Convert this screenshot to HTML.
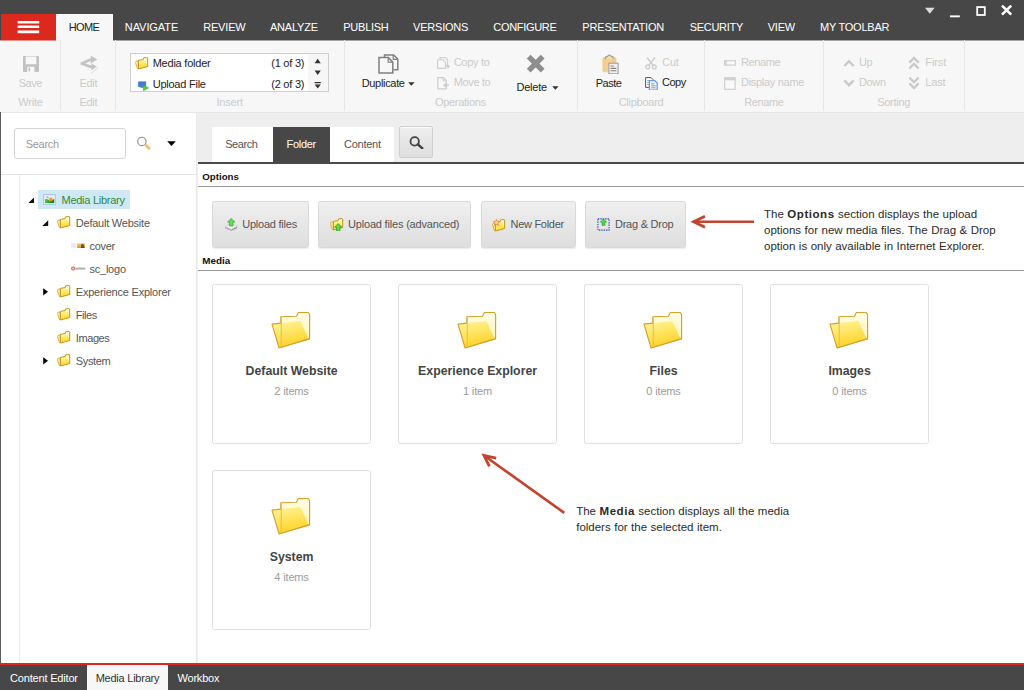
<!DOCTYPE html>
<html><head><meta charset="utf-8"><title>Media Library</title>
<style>
*{box-sizing:border-box;margin:0;padding:0}
html,body{width:1024px;height:690px;overflow:hidden;background:#fff;font-family:"Liberation Sans",sans-serif}
.a{position:absolute;display:block}
.t{position:absolute;white-space:nowrap;font-family:"Liberation Sans",sans-serif}
</style></head><body>
<svg width="0" height="0" style="position:absolute"><defs>
<linearGradient id="gb" x1="0" y1="0" x2="0" y2="1"><stop offset="0" stop-color="#fffde8"/><stop offset="1" stop-color="#fff3a6"/></linearGradient>
<linearGradient id="gf" x1="0" y1="0" x2="0.3" y2="1"><stop offset="0" stop-color="#fff596"/><stop offset="1" stop-color="#ffd019"/></linearGradient>
<g id="folder">
<path d="M9.3,5.3 L25,4.8 L26.8,1 L36.8,1 L38.1,3 L38.1,27.5 L9.3,35.7 Z" fill="url(#gb)" stroke="#d4a02e" stroke-width="1.15" stroke-linejoin="round"/>
<path d="M0.5,12.6 L28.9,9.5 L37,27 L7.6,36.5 Z" fill="url(#gf)" fill-opacity=".9"/>
<path d="M9.3,11.6 L0.5,12.6 L7.6,36.5 L38,27" fill="none" stroke="#d4a02e" stroke-width="1.15" stroke-linejoin="round"/>
<path d="M9.9,6 L9.9,35" fill="none" stroke="#e8bf55" stroke-width=".9"/>
</g>
<linearGradient id="gs" x1="0" y1="0" x2="0.25" y2="1"><stop offset="0" stop-color="#fffcd8"/><stop offset=".45" stop-color="#fff27a"/><stop offset="1" stop-color="#ffd92a"/></linearGradient>
<g id="sfolder">
<path d="M8.3,10 C6,9.9 5.3,10.8 5.8,12.5 L7.7,17.7 L8.6,17.6 Z" fill="#fff4b4" stroke="#d6a42e" stroke-width=".9" stroke-linejoin="round"/>
<path d="M8.5,9.4 L13.3,8.5 L13.9,6.7 L17.5,6.7 L17.8,7.1 L17.8,15.5 L8.5,18 Z" fill="url(#gs)" stroke="#c6931d" stroke-width="1" stroke-linejoin="round"/>
<path d="M14.4,7.6 L16.9,7.6 L16.9,13.6 L15.6,10 L14,10 Z" fill="#fffef0" fill-opacity=".85"/>
</g>
</defs></svg>
<div class="a" style="left:0px;top:0px;width:1024px;height:40px;background:#474747"></div>
<div class="a" style="left:1px;top:14px;width:55px;height:26.5px;background:#dc291e"></div>
<svg class="a" style="left:17px;top:20px;" width="23" height="14" viewBox="17 20 23 14"><path d="M17.6,20.9 H39.2 V23.4 H17.6 Z M17.6,25.6 H39.2 V28.1 H17.6 Z M17.6,30.6 H39.2 V33.2 H17.6 Z" fill="#fff"/></svg>
<div class="a" style="left:56px;top:14px;width:57px;height:27px;background:#f7f7f7"></div>
<div class="t" style="left:68.70px;top:20.00px;font-size:11.00px;line-height:14px;color:#222;letter-spacing:-0.634px;">HOME</div>
<div class="t" style="left:124.80px;top:20.00px;font-size:11.00px;line-height:14px;color:#fff;letter-spacing:-0.070px;">NAVIGATE</div>
<div class="t" style="left:203.20px;top:20.00px;font-size:11.00px;line-height:14px;color:#fff;letter-spacing:-0.179px;">REVIEW</div>
<div class="t" style="left:269.90px;top:20.00px;font-size:11.00px;line-height:14px;color:#fff;letter-spacing:-0.202px;">ANALYZE</div>
<div class="t" style="left:343.30px;top:20.00px;font-size:11.00px;line-height:14px;color:#fff;letter-spacing:-0.262px;">PUBLISH</div>
<div class="t" style="left:413.00px;top:20.00px;font-size:11.00px;line-height:14px;color:#fff;letter-spacing:-0.207px;">VERSIONS</div>
<div class="t" style="left:493.30px;top:20.00px;font-size:11.00px;line-height:14px;color:#fff;letter-spacing:-0.313px;">CONFIGURE</div>
<div class="t" style="left:582.30px;top:20.00px;font-size:11.00px;line-height:14px;color:#fff;letter-spacing:-0.176px;">PRESENTATION</div>
<div class="t" style="left:689.70px;top:20.00px;font-size:11.00px;line-height:14px;color:#fff;letter-spacing:-0.289px;">SECURITY</div>
<div class="t" style="left:767.80px;top:20.00px;font-size:11.00px;line-height:14px;color:#fff;letter-spacing:-0.271px;">VIEW</div>
<div class="t" style="left:820.00px;top:20.00px;font-size:11.00px;line-height:14px;color:#fff;letter-spacing:-0.225px;">MY TOOLBAR</div>
<svg class="a" style="left:920px;top:0px;" width="104" height="22" viewBox="920 0 104 22">
<path d="M925,7.8 L934.6,7.8 L929.8,13.8 Z" fill="#ddd"/>
<rect x="950" y="15.4" width="9.8" height="1.9" fill="#fff"/>
<rect x="977.2" y="7.1" width="7.6" height="7.9" fill="none" stroke="#fff" stroke-width="1.8"/>
<path d="M1002,5.6 L1011.2,14.6 M1011.2,5.6 L1002,14.6" stroke="#fff" stroke-width="2.6" fill="none"/></svg>
<div class="a" style="left:0px;top:40px;width:1024px;height:71.5px;background:#f7f7f7"></div>
<div class="a" style="left:0px;top:40px;width:1024px;height:1px;background:#a4a4a4"></div>
<div class="a" style="left:1px;top:40px;width:55px;height:1px;background:#e88f88"></div>
<div class="a" style="left:56px;top:40px;width:57px;height:1px;background:#f7f7f7"></div>
<div class="a" style="left:0px;top:111.5px;width:1024px;height:1px;background:#e6e6e6"></div>
<div class="a" style="left:60px;top:40px;width:1px;height:71px;background:#e7e7e7"></div>
<div class="a" style="left:115px;top:40px;width:1px;height:71px;background:#e7e7e7"></div>
<div class="a" style="left:343.5px;top:40px;width:1px;height:71px;background:#e7e7e7"></div>
<div class="a" style="left:577px;top:40px;width:1px;height:71px;background:#e7e7e7"></div>
<div class="a" style="left:704px;top:40px;width:1px;height:71px;background:#e7e7e7"></div>
<div class="a" style="left:823px;top:40px;width:1px;height:71px;background:#e7e7e7"></div>
<div class="a" style="left:964px;top:40px;width:1px;height:71px;background:#e7e7e7"></div>
<div class="t" style="left:18.20px;top:95.00px;font-size:11.00px;line-height:14px;color:#cbcbcb;letter-spacing:-0.166px;">Write</div>
<div class="t" style="left:79.50px;top:95.00px;font-size:11.00px;line-height:14px;color:#cbcbcb;letter-spacing:-0.318px;">Edit</div>
<div class="t" style="left:216.50px;top:95.00px;font-size:11.00px;line-height:14px;color:#cbcbcb;letter-spacing:-0.202px;">Insert</div>
<div class="t" style="left:435.00px;top:95.00px;font-size:11.00px;line-height:14px;color:#cbcbcb;letter-spacing:-0.312px;">Operations</div>
<div class="t" style="left:618.70px;top:95.00px;font-size:11.00px;line-height:14px;color:#cbcbcb;letter-spacing:-0.261px;">Clipboard</div>
<div class="t" style="left:744.30px;top:95.00px;font-size:11.00px;line-height:14px;color:#cbcbcb;letter-spacing:-0.416px;">Rename</div>
<div class="t" style="left:877.20px;top:95.00px;font-size:11.00px;line-height:14px;color:#cbcbcb;letter-spacing:-0.276px;">Sorting</div>
<svg class="a" style="left:23px;top:55.7px;" width="16" height="16" viewBox="0 0 16 16"><path d="M1,0 H15 Q16,0 16,1 V15 Q16,16 15,16 H1 Q0,16 0,15 V1 Q0,0 1,0 Z M2.7,0.6 V8.2 H13.3 V0.6 Z M4.2,10.7 V16 H11.4 V10.7 Z" fill="#c2c2c2" fill-rule="evenodd"/><rect x="5.5" y="11.6" width="1.6" height="3.6" fill="#c2c2c2"/></svg>
<div class="t" style="left:18.70px;top:76.00px;font-size:11.00px;line-height:14px;color:#cbcbcb;letter-spacing:-0.424px;">Save</div>
<svg class="a" style="left:79px;top:55px;" width="21" height="20" viewBox="79 55 21 20"><path d="M80.6,63.6 C86,63.6 86,59.6 92.5,59.6 M80.6,63.6 C86,63.6 87,67 92.6,66.8" stroke="#c4c4c4" stroke-width="2.7" fill="none"/><path d="M90.8,55.6 L97.4,59.5 L90.8,63.4 Z M91.4,63.2 L96.8,66.8 L91.4,70.2 Z" fill="#c4c4c4"/><path d="M91.4,73.4 L98.2,67" stroke="#e6e6e6" stroke-width="1.4"/></svg>
<div class="t" style="left:79.50px;top:76.00px;font-size:11.00px;line-height:14px;color:#cbcbcb;letter-spacing:-0.318px;">Edit</div>
<div class="a" style="left:130px;top:53px;width:198.5px;height:38.7px;background:#fff;border:1px solid #cfcfcf"></div>
<div class="a" style="left:308px;top:54px;width:19.5px;height:36.7px;background:#f6f6f6"></div>
<svg class="a" style="left:135px;top:57px;" width="14" height="13" viewBox="5.1 6 14 13"><use href="#sfolder"/></svg>
<div class="t" style="left:152.70px;top:56.00px;font-size:11.00px;line-height:14px;color:#222;letter-spacing:-0.230px;">Media folder</div>
<div class="t" style="left:152.70px;top:77.00px;font-size:11.00px;line-height:14px;color:#222;letter-spacing:-0.234px;">Upload File</div>
<div class="t" style="left:271.20px;top:56.00px;font-size:11.00px;line-height:14px;color:#222;letter-spacing:-0.221px;">(1 of 3)</div>
<div class="t" style="left:271.20px;top:77.00px;font-size:11.00px;line-height:14px;color:#222;letter-spacing:-0.221px;">(2 of 3)</div>
<svg class="a" style="left:137.5px;top:79.5px;" width="12" height="11" viewBox="0 0 12 11"><rect x="0.7" y="1.9" width="7" height="4.8" fill="#3f7fd6" stroke="#3a6cc4" stroke-width=".8"/><rect x="2.4" y="7" width="3" height="1" fill="#8a97b3"/><path d="M5.4,5 L10.6,7.9 L5.4,10.8 Z" fill="#56c948" stroke="#36a336" stroke-width=".5"/></svg>
<svg class="a" style="left:313px;top:57px;" width="10" height="33" viewBox="0 0 10 33"><path d="M1.6,6.2 L7.8,6.2 L4.7,1.7 Z M1.6,13.6 L7.8,13.6 L4.7,18 Z M1.6,25 H7.8 V26.2 H1.6 Z M1.6,27.4 L7.8,27.4 L4.7,31.4 Z" fill="#333"/></svg>
<svg class="a" style="left:377.5px;top:54px;" width="21" height="20" viewBox="0 0 21 20"><path d="M6.5,3.2 V0.9 H15.6 L19.8,5 V15.8 H15.4" fill="none" stroke="#808080" stroke-width="1.5"/><path d="M15.2,1 V5.4 H19.6" fill="none" stroke="#808080" stroke-width="1.2"/><path d="M1,3.6 H10.4 L14.8,8 V19 H1 Z" fill="#f7f7f7" stroke="#808080" stroke-width="1.5"/><path d="M10.2,3.8 V8.2 H14.6" fill="none" stroke="#808080" stroke-width="1.2"/></svg>
<div class="t" style="left:361.70px;top:76.00px;font-size:11.00px;line-height:14px;color:#222;letter-spacing:-0.320px;">Duplicate</div>
<svg class="a" style="left:408px;top:82px;" width="7" height="4" viewBox="0 0 7 4"><path d="M0.2,0.3 H6.6 L3.4,3.8 Z" fill="#333"/></svg>
<svg class="a" style="left:437px;top:57px;" width="12.5" height="12" viewBox="0 0 12.5 12"><path d="M3,2.6 V0.6 H8.4 L10.6,2.8 V8.4 H8.6" fill="none" stroke="#cfcfcf" stroke-width="1.1"/><path d="M0.6,2.8 H6 L8.4,5.2 V11.4 H0.6 Z" fill="none" stroke="#cfcfcf" stroke-width="1.1"/><path d="M8.6,9.6 H12 M10.6,8 L12.2,9.6 L10.6,11.2" stroke="#cfcfcf" stroke-width="1.1" fill="none"/></svg>
<div class="t" style="left:453.70px;top:55.00px;font-size:11.00px;line-height:14px;color:#cbcbcb;letter-spacing:-0.268px;">Copy to</div>
<svg class="a" style="left:437px;top:77px;" width="12.5" height="12.5" viewBox="0 0 12.5 12.5"><path d="M0.8,0.6 H6.4 L9.4,3.6 V11.8 H0.8 Z" fill="none" stroke="#cfcfcf" stroke-width="1.2"/><path d="M6.2,0.8 V3.8 H9.2" fill="none" stroke="#cfcfcf" stroke-width="1"/><path d="M12,8.2 H7.2 M9,6.2 L7,8.2 L9,10.2" stroke="#cfcfcf" stroke-width="1.4" fill="none"/></svg>
<div class="t" style="left:453.70px;top:75.00px;font-size:11.00px;line-height:14px;color:#cbcbcb;letter-spacing:-0.355px;">Move to</div>
<svg class="a" style="left:526.3px;top:54.2px;" width="19.4" height="19.4" viewBox="0 0 19.4 19.4"><path d="M2.7,2.7 L16.7,16.7 M16.7,2.7 L2.7,16.7" stroke="#8e8e8e" stroke-width="5.4" fill="none"/></svg>
<div class="t" style="left:516.50px;top:80.00px;font-size:11.00px;line-height:14px;color:#222;letter-spacing:-0.220px;">Delete</div>
<svg class="a" style="left:552.2px;top:85.9px;" width="7" height="4" viewBox="0 0 7 4"><path d="M0.2,0.3 H6.6 L3.4,3.8 Z" fill="#333"/></svg>
<svg class="a" style="left:602px;top:53.5px;" width="17.5" height="20.5" viewBox="0 0 17.5 20.5"><rect x="0.8" y="3.6" width="13.2" height="14.2" rx="1.2" fill="#f2cf8e" stroke="#ecc47a" stroke-width=".6"/><path d="M3.6,5.2 V3.4 Q3.6,2.6 4.4,2.6 H5.4 A2.1,2.1 0 0 1 9.4,2.6 H10.4 Q11.2,2.6 11.2,3.4 V5.2" fill="#f6dca8" stroke="#9e9e9e" stroke-width="1.1"/><rect x="6.9" y="9.2" width="9.2" height="10.6" fill="#f1f1f1" stroke="#9a9a9a" stroke-width="1"/><path d="M8.6,12 H11.8 M8.6,14.4 H14.4 M8.6,16.8 H14.4" stroke="#858585" stroke-width="1.1"/></svg>
<div class="t" style="left:595.70px;top:76.00px;font-size:11.00px;line-height:14px;color:#222;letter-spacing:-0.457px;">Paste</div>
<svg class="a" style="left:645px;top:57px;" width="12" height="12.5" viewBox="0 0 12 12.5"><path d="M2,0.5 L8.4,8.6 M10,0.5 L3.6,8.6" stroke="#cdcdcd" stroke-width="1.5" fill="none"/><circle cx="2.7" cy="9.9" r="1.9" fill="none" stroke="#cdcdcd" stroke-width="1.3"/><circle cx="9.3" cy="9.9" r="1.9" fill="none" stroke="#cdcdcd" stroke-width="1.3"/></svg>
<div class="t" style="left:662.30px;top:55.00px;font-size:10.50px;line-height:14px;color:#cbcbcb;">Cut</div>
<svg class="a" style="left:644.5px;top:76.5px;" width="13" height="13.5" viewBox="0 0 13 13.5"><path d="M0.6,0.6 H6 L8,2.6 V10.4 H0.6 Z" fill="#fff" stroke="#555" stroke-width="1"/><path d="M2.2,3.6 H5.6 M2.2,5.6 H6 M2.2,7.6 H4" stroke="#888" stroke-width=".8"/><path d="M4.4,3.6 H9.8 L12.2,6 V13 H4.4 Z" fill="#eef4fc" stroke="#6b9ad6" stroke-width="1.2"/><path d="M6.2,6.8 H9.4 M6.2,8.8 H10.6 M6.2,10.8 H10.6" stroke="#8c8c8c" stroke-width=".9"/></svg>
<div class="t" style="left:662.00px;top:75.00px;font-size:11.00px;line-height:14px;color:#222;letter-spacing:-0.493px;">Copy</div>
<svg class="a" style="left:724px;top:60px;" width="12" height="6" viewBox="0 0 12 6"><rect x="0.6" y="0.7" width="10.8" height="4.4" fill="#f9f9f9" stroke="#cfcfcf" stroke-width="1.2"/><rect x="0.6" y="0.7" width="2" height="4.4" fill="#cfcfcf"/></svg>
<div class="t" style="left:741.00px;top:55.00px;font-size:11.00px;line-height:14px;color:#cbcbcb;letter-spacing:-0.376px;">Rename</div>
<svg class="a" style="left:724px;top:77px;" width="12" height="13" viewBox="0 0 12 13"><rect x="0.7" y="0.7" width="10.4" height="11.6" fill="#fafafa" stroke="#cfcfcf" stroke-width="1.2"/><rect x="0.7" y="0.7" width="10.4" height="2.6" fill="#cfcfcf"/></svg>
<div class="t" style="left:741.00px;top:75.00px;font-size:11.00px;line-height:14px;color:#cbcbcb;letter-spacing:-0.295px;">Display name</div>
<svg class="a" style="left:842.5px;top:59px;" width="12" height="8.5" viewBox="0 0 12 8.5"><path d="M1.4,7 L6,2.2 L10.6,7" stroke="#c9c9c9" stroke-width="2.4" fill="none"/></svg>
<div class="t" style="left:859.00px;top:55.00px;font-size:11.00px;line-height:14px;color:#cbcbcb;letter-spacing:-0.562px;">Up</div>
<svg class="a" style="left:842.5px;top:79px;" width="12" height="8.5" viewBox="0 0 12 8.5"><path d="M1.4,1.4 L6,6.2 L10.6,1.4" stroke="#c9c9c9" stroke-width="2.4" fill="none"/></svg>
<div class="t" style="left:859.00px;top:75.00px;font-size:11.00px;line-height:14px;color:#cbcbcb;letter-spacing:-0.375px;">Down</div>
<svg class="a" style="left:908.3px;top:56px;" width="12" height="14" viewBox="0 0 12 14"><path d="M1.4,6.6 L6,2 L10.6,6.6 M1.4,12.4 L6,7.8 L10.6,12.4" stroke="#c9c9c9" stroke-width="2.3" fill="none"/></svg>
<div class="t" style="left:925.30px;top:55.00px;font-size:11.00px;line-height:14px;color:#cbcbcb;letter-spacing:-0.121px;">First</div>
<svg class="a" style="left:908.3px;top:76px;" width="12" height="14" viewBox="0 0 12 14"><path d="M1.4,1.6 L6,6.2 L10.6,1.6 M1.4,7.4 L6,12 L10.6,7.4" stroke="#c9c9c9" stroke-width="2.3" fill="none"/></svg>
<div class="t" style="left:925.30px;top:75.00px;font-size:11.00px;line-height:14px;color:#cbcbcb;letter-spacing:-0.197px;">Last</div>
<div class="a" style="left:0px;top:112px;width:1px;height:553px;background:#5a5a5a"></div>
<div class="a" style="left:196px;top:112px;width:2.4px;height:551px;background:linear-gradient(90deg,#e6e6e6,#f2f2f2)"></div>
<div class="a" style="left:1px;top:174.3px;width:195px;height:1px;background:#e4e4e4"></div>
<div class="a" style="left:18.5px;top:175px;width:1px;height:488px;background:#ececec"></div>
<div class="a" style="left:14px;top:128px;width:112px;height:31px;background:#fff;border:1px solid #d4d4d4;border-radius:3px"></div>
<div class="t" style="left:25.70px;top:137.00px;font-size:11.00px;line-height:14px;color:#9a9a9a;letter-spacing:-0.271px;">Search</div>
<svg class="a" style="left:135.6px;top:136.3px;" width="16" height="15" viewBox="0 0 16 15"><path d="M9.4,8.8 L13.9,13.2" stroke="#efc271" stroke-width="3" /><circle cx="5.9" cy="5.4" r="4.2" fill="#fdfdfd" stroke="#8f8f8f" stroke-width="1.1"/></svg>
<svg class="a" style="left:167px;top:140.5px;" width="9" height="5.2" viewBox="0 0 9 5.2"><path d="M0.2,0.2 H8.8 L4.5,5 Z" fill="#000"/></svg>
<div class="a" style="left:38px;top:190px;width:92.3px;height:19px;background:#cfe8f5"></div>
<svg class="a" style="left:28px;top:197px;" width="6.4" height="6.2" viewBox="0 0 6.4 6.2"><path d="M6.2,0.2 V6 H0.3 Z" fill="#111"/></svg>
<svg class="a" style="left:38px;top:188px;" width="24" height="24" viewBox="0 0 24 24"><defs><linearGradient id="gh" x1="0" y1="0" x2="1" y2="0.3"><stop offset="0" stop-color="#62d440"/><stop offset="1" stop-color="#0b8a18"/></linearGradient></defs><rect x="5.7" y="6.6" width="11.6" height="9.7" fill="#eef3fc" stroke="#a8c1ea" stroke-width="1"/><rect x="7" y="8" width="9.2" height="7" fill="#e9eef8"/><path d="M7.6,8.4 L9.4,8.2 L11.4,10.2 L10,10.6 Z" fill="#93a3c4" fill-opacity=".8"/><path d="M7,10.9 L9,11.1 L11.6,12.4 L14,12 L16.2,10.9 V15 H7 Z" fill="url(#gh)"/><circle cx="12.9" cy="11.4" r="1.8" fill="#ff9224"/></svg>
<div class="t" style="left:61.50px;top:193.00px;font-size:11.00px;line-height:14px;color:#2d8a3c;letter-spacing:-0.262px;">Media Library</div>
<svg class="a" style="left:42.2px;top:220px;" width="6.4" height="6.2" viewBox="0 0 6.4 6.2"><path d="M6.2,0.2 V6 H0.3 Z" fill="#111"/></svg>
<svg class="a" style="left:57.1px;top:216.0px;" width="14" height="13" viewBox="5.1 6 14 13"><use href="#sfolder"/></svg>
<div class="t" style="left:75.80px;top:216.00px;font-size:11.00px;line-height:14px;color:#555;letter-spacing:-0.232px;">Default Website</div>
<div class="a" style="left:71px;top:243px;width:5px;height:5px;background:#ededed"></div>
<svg class="a" style="left:77.2px;top:242.6px;" width="8" height="5.4" viewBox="0 0 8 5.4"><rect width="8" height="5.4" fill="#f2c244"/><path d="M3.4,5.4 L4.6,0.6 L6,0.2 L8,5.4 Z" fill="#5c5048"/><path d="M0,5.4 L1.6,2 L3.6,5.4 Z" fill="#d89a2a"/><rect width="8" height="0.9" fill="#f7e3a6"/></svg>
<div class="t" style="left:89.50px;top:239.00px;font-size:11.00px;line-height:14px;color:#555;letter-spacing:-0.300px;">cover</div>
<svg class="a" style="left:70.6px;top:266px;" width="15" height="5" viewBox="0 0 15 5"><circle cx="2.1" cy="2.5" r="1.5" fill="#fbe4e4" stroke="#ea5050" stroke-width="1.1"/><rect x="4.4" y="1.6" width="10" height="1.9" fill="#adadad"/></svg>
<div class="t" style="left:89.50px;top:262.00px;font-size:11.00px;line-height:14px;color:#555;letter-spacing:-0.236px;">sc_logo</div>
<svg class="a" style="left:43px;top:288.1px;" width="5.2" height="7.6" viewBox="0 0 5.2 7.6"><path d="M0.2,0.2 L5,3.8 L0.2,7.4 Z" fill="#000"/></svg>
<svg class="a" style="left:57.1px;top:285.2px;" width="14" height="13" viewBox="5.1 6 14 13"><use href="#sfolder"/></svg>
<div class="t" style="left:75.80px;top:285.00px;font-size:11.00px;line-height:14px;color:#555;letter-spacing:-0.214px;">Experience Explorer</div>
<svg class="a" style="left:57.1px;top:308.2px;" width="14" height="13" viewBox="5.1 6 14 13"><use href="#sfolder"/></svg>
<div class="t" style="left:75.80px;top:308.00px;font-size:11.00px;line-height:14px;color:#555;letter-spacing:-0.431px;">Files</div>
<svg class="a" style="left:57.1px;top:331.2px;" width="14" height="13" viewBox="5.1 6 14 13"><use href="#sfolder"/></svg>
<div class="t" style="left:75.80px;top:331.00px;font-size:11.00px;line-height:14px;color:#555;letter-spacing:-0.415px;">Images</div>
<svg class="a" style="left:43px;top:357.1px;" width="5.2" height="7.6" viewBox="0 0 5.2 7.6"><path d="M0.2,0.2 L5,3.8 L0.2,7.4 Z" fill="#000"/></svg>
<svg class="a" style="left:57.1px;top:354.2px;" width="14" height="13" viewBox="5.1 6 14 13"><use href="#sfolder"/></svg>
<div class="t" style="left:75.80px;top:354.00px;font-size:11.00px;line-height:14px;color:#555;letter-spacing:-0.355px;">System</div>
<div class="a" style="left:198.3px;top:112.5px;width:825.7px;height:49.5px;background:#eeeeee"></div>
<div class="a" style="left:198.3px;top:161.8px;width:825.7px;height:1.8px;background:#4a4a4a"></div>
<div class="a" style="left:211.8px;top:126.7px;width:61.4px;height:35.3px;background:#fff"></div>
<div class="a" style="left:273.2px;top:126.7px;width:56.4px;height:36.5px;background:#474747"></div>
<div class="a" style="left:329.6px;top:126.7px;width:64.6px;height:35.3px;background:#fff"></div>
<div class="t" style="left:225.20px;top:137.00px;font-size:11.00px;line-height:14px;color:#555;letter-spacing:-0.411px;">Search</div>
<div class="t" style="left:286.50px;top:137.00px;font-size:11.00px;line-height:14px;color:#fff;letter-spacing:-0.296px;">Folder</div>
<div class="t" style="left:344.00px;top:137.00px;font-size:11.00px;line-height:14px;color:#555;letter-spacing:-0.255px;">Content</div>
<div class="a" style="left:399.4px;top:126px;width:33.2px;height:32px;background:linear-gradient(#eeeeee,#dedede);border:1px solid #cfcfcf;border-radius:2px;box-shadow:inset 0 1px 0 rgba(255,255,255,.7)"></div>
<svg class="a" style="left:408.8px;top:135.6px;" width="15.4" height="13.6" viewBox="0 0 15.4 13.6"><circle cx="5.7" cy="5.4" r="4.2" fill="none" stroke="#444" stroke-width="1.8"/><path d="M8.9,8.4 L13.2,12.2" stroke="#444" stroke-width="2.5" stroke-linecap="round"/></svg>
<div class="t" style="left:202.20px;top:170.00px;font-size:9.74px;line-height:13px;color:#111;font-weight:bold;">Options</div>
<div class="a" style="left:198.3px;top:185.8px;width:825.7px;height:1px;background:#9a9a9a"></div>
<div class="t" style="left:202.20px;top:254.00px;font-size:9.88px;line-height:13px;color:#111;font-weight:bold;">Media</div>
<div class="a" style="left:198.3px;top:269.6px;width:825.7px;height:1px;background:#9a9a9a"></div>
<div class="a" style="left:212.2px;top:200.5px;width:96.8px;height:47px;background:linear-gradient(#efefef,#dedede);border:1px solid #d9d9d9;border-radius:2.5px;box-shadow:0 1px 1px rgba(0,0,0,.08)"></div>
<div class="a" style="left:318px;top:200.5px;width:152.8px;height:47px;background:linear-gradient(#efefef,#dedede);border:1px solid #d9d9d9;border-radius:2.5px;box-shadow:0 1px 1px rgba(0,0,0,.08)"></div>
<div class="a" style="left:480.5px;top:200.5px;width:95.3px;height:47px;background:linear-gradient(#efefef,#dedede);border:1px solid #d9d9d9;border-radius:2.5px;box-shadow:0 1px 1px rgba(0,0,0,.08)"></div>
<div class="a" style="left:585px;top:200.5px;width:100.6px;height:47px;background:linear-gradient(#efefef,#dedede);border:1px solid #d9d9d9;border-radius:2.5px;box-shadow:0 1px 1px rgba(0,0,0,.08)"></div>
<div class="t" style="left:242.20px;top:217.00px;font-size:11.00px;line-height:14px;color:#555;letter-spacing:-0.225px;">Upload files</div>
<div class="t" style="left:348.00px;top:217.00px;font-size:11.00px;line-height:14px;color:#555;letter-spacing:-0.185px;">Upload files (advanced)</div>
<div class="t" style="left:510.50px;top:217.00px;font-size:11.00px;line-height:14px;color:#555;letter-spacing:-0.283px;">New Folder</div>
<div class="t" style="left:615.00px;top:217.00px;font-size:11.00px;line-height:14px;color:#555;letter-spacing:-0.244px;">Drag &amp; Drop</div>
<svg class="a" style="left:224.5px;top:218.2px;" width="12.4" height="13" viewBox="0 0 12.4 13"><path d="M0.4,8.6 L6.2,11.4 L12,8.6 V10.2 L6.2,12.8 L0.4,10.2 Z" fill="#8d8d8d"/><path d="M0.4,8.6 L6.2,11.4 V12.8 L0.4,10.2 Z" fill="#b9b9b9"/><path d="M0.4,8.6 L6.2,5.8 L12,8.6 L6.2,11.4 Z" fill="#f6f6f6" stroke="#b4b4b4" stroke-width=".5"/><path d="M6.2,0.5 L9.8,4 H8 V8 H4.4 V4 H2.6 Z" fill="#62e052" stroke="#2fa82f" stroke-width=".7" stroke-linejoin="round"/></svg>
<svg class="a" style="left:330px;top:218px;" width="14" height="13" viewBox="5.1 6 14 13"><use href="#sfolder"/></svg>
<svg class="a" style="left:334.2px;top:222.6px;" width="8.4" height="8.6" viewBox="0 0 8.4 8.6"><path d="M4.2,0.6 L7.8,4.2 H5.9 V7.8 H2.5 V4.2 H0.6 Z" fill="#5cdc4e" stroke="#2a9d2a" stroke-width=".8" stroke-linejoin="round"/></svg>
<svg class="a" style="left:492.4px;top:218.8px;" width="14" height="13" viewBox="5.1 6 14 13"><use href="#sfolder"/></svg>
<svg class="a" style="left:492.8px;top:218.8px;" width="7" height="7" viewBox="0 0 7 7"><path d="M3.5,0.2 L4.4,2.2 L6.8,2.6 L5,4.2 L5.6,6.6 L3.5,5.4 L1.4,6.6 L2,4.2 L0.2,2.6 L2.6,2.2 Z" fill="#ff8a3c" stroke="#ff7a50" stroke-width=".6" stroke-linejoin="round"/><circle cx="3.5" cy="3.5" r="1.5" fill="#ffe27a"/></svg>
<svg class="a" style="left:596.8px;top:218.2px;" width="13" height="13" viewBox="0 0 13 13"><rect x="0.9" y="0.9" width="11.2" height="11.2" fill="none" stroke="#2b49c0" stroke-width="1.1" stroke-dasharray="1.4 1"/><path d="M6.5,0.9 L9.6,4.1 H8 V7.3 H5 V4.1 H3.4 Z" fill="#4fd84a" stroke="#27a127" stroke-width=".7" stroke-linejoin="round"/></svg>
<svg class="a" style="left:688px;top:210px;" width="70" height="24" viewBox="688 210 70 24"><path d="M754,221.7 H694" stroke="#c4432c" stroke-width="2.6" fill="none"/><path d="M705,216.3 L693.6,221.7 L705,227.3" stroke="#c4432c" stroke-width="2.8" fill="none" stroke-linejoin="miter"/></svg>
<div class="t" id="an1" style="left:764px;top:205.5px;font-size:11.5px;word-spacing:.3px;line-height:16px;color:#2a2a2a">The <b style="letter-spacing:.55px">Options</b> section displays the upload<br>options for new media files. The Drag &amp; Drop<br>option is only available in Internet Explorer.</div>
<svg class="a" style="left:478px;top:450px;" width="92" height="68" viewBox="478 450 92 68"><path d="M564.3,512.9 L484,455.5" stroke="#c4432c" stroke-width="2.6" fill="none"/><path d="M496.2,458.2 L484,455.6 L489.4,466.4" stroke="#c4432c" stroke-width="2.8" fill="none" stroke-linejoin="miter"/></svg>
<div class="t" id="an2" style="left:576.2px;top:503.2px;font-size:11.5px;word-spacing:.3px;line-height:16px;color:#2a2a2a">The <b style="letter-spacing:.55px">Media</b> section displays all the media<br>folders for the selected item.</div>
<div class="a" style="left:212px;top:284px;width:159px;height:160px;background:#fff;border:1px solid #e0e0e0;border-radius:2.5px"></div>
<svg class="a" style="left:270.8px;top:310.6px;" width="40" height="38.5" viewBox="-0.5 -0.5 40 38.5"><use href="#folder"/></svg>
<div class="t" style="left:245.58px;top:363.00px;font-size:12.30px;line-height:16px;color:#444;font-weight:bold;">Default Website</div>
<div class="t" style="left:274.36px;top:384.00px;font-size:11.00px;line-height:14px;color:#9a9a9a;letter-spacing:-0.161px;">2 items</div>
<div class="a" style="left:398px;top:284px;width:159px;height:160px;background:#fff;border:1px solid #e0e0e0;border-radius:2.5px"></div>
<svg class="a" style="left:456.8px;top:310.6px;" width="40" height="38.5" viewBox="-0.5 -0.5 40 38.5"><use href="#folder"/></svg>
<div class="t" style="left:418.12px;top:363.00px;font-size:12.30px;line-height:16px;color:#444;font-weight:bold;">Experience Explorer</div>
<div class="t" style="left:463.03px;top:384.00px;font-size:11.00px;line-height:14px;color:#9a9a9a;letter-spacing:-0.163px;">1 item</div>
<div class="a" style="left:584px;top:284px;width:159px;height:160px;background:#fff;border:1px solid #e0e0e0;border-radius:2.5px"></div>
<svg class="a" style="left:642.8000000000001px;top:310.6px;" width="40" height="38.5" viewBox="-0.5 -0.5 40 38.5"><use href="#folder"/></svg>
<div class="t" style="left:649.59px;top:363.00px;font-size:12.30px;line-height:16px;color:#444;font-weight:bold;">Files</div>
<div class="t" style="left:646.36px;top:384.00px;font-size:11.00px;line-height:14px;color:#9a9a9a;letter-spacing:-0.161px;">0 items</div>
<div class="a" style="left:770px;top:284px;width:159px;height:160px;background:#fff;border:1px solid #e0e0e0;border-radius:2.5px"></div>
<svg class="a" style="left:828.8000000000001px;top:310.6px;" width="40" height="38.5" viewBox="-0.5 -0.5 40 38.5"><use href="#folder"/></svg>
<div class="t" style="left:828.41px;top:363.00px;font-size:12.30px;line-height:16px;color:#444;font-weight:bold;">Images</div>
<div class="t" style="left:832.36px;top:384.00px;font-size:11.00px;line-height:14px;color:#9a9a9a;letter-spacing:-0.161px;">0 items</div>
<div class="a" style="left:212px;top:470px;width:159px;height:160px;background:#fff;border:1px solid #e0e0e0;border-radius:2.5px"></div>
<svg class="a" style="left:270.8px;top:496.6px;" width="40" height="38.5" viewBox="-0.5 -0.5 40 38.5"><use href="#folder"/></svg>
<div class="t" style="left:269.72px;top:549.00px;font-size:12.30px;line-height:16px;color:#444;font-weight:bold;">System</div>
<div class="t" style="left:274.36px;top:570.00px;font-size:11.00px;line-height:14px;color:#9a9a9a;letter-spacing:-0.161px;">4 items</div>
<div class="a" style="left:0px;top:663px;width:1024px;height:2.2px;background:#dc291e"></div>
<div class="a" style="left:0px;top:665px;width:1024px;height:25px;background:#474747"></div>
<div class="a" style="left:87px;top:665px;width:81.3px;height:25px;background:#f7f7f7"></div>
<div class="t" style="left:10.00px;top:671.00px;font-size:11.00px;line-height:14px;color:#fff;letter-spacing:-0.178px;">Content Editor</div>
<div class="t" style="left:95.70px;top:671.00px;font-size:11.00px;line-height:14px;color:#333;letter-spacing:-0.237px;">Media Library</div>
<div class="t" style="left:177.50px;top:671.00px;font-size:11.00px;line-height:14px;color:#fff;letter-spacing:-0.200px;">Workbox</div>
</body></html>
